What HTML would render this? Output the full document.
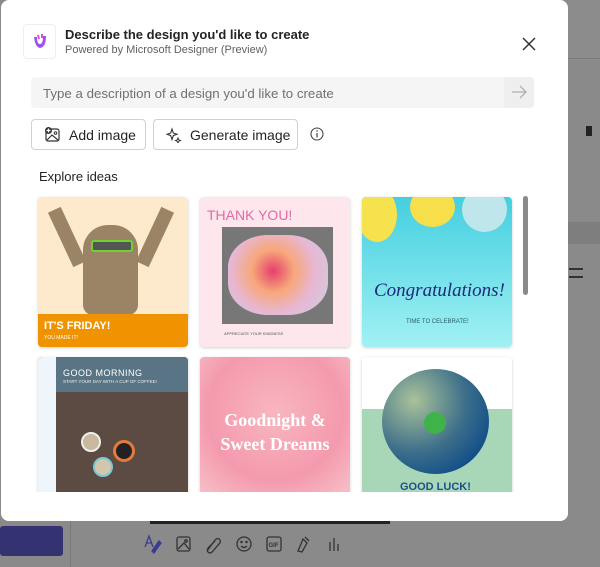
<!DOCTYPE html>
<html><head><meta charset="utf-8"><style>
*{box-sizing:border-box;margin:0;padding:0}
body{width:600px;height:567px;overflow:hidden;background:#8a8a8a;font-family:"Liberation Sans",sans-serif;position:relative}
.abs{position:absolute}
.dlg{left:1px;top:0;width:567px;height:521px;background:#fff;border-radius:8px;overflow:hidden}
.card{position:absolute;width:150px;border-radius:4px;overflow:hidden;box-shadow:0 1px 3px rgba(0,0,0,.18)}
.btn{position:absolute;top:119px;height:31px;border:1px solid #d1d1d1;border-radius:4px;font-size:14px;color:#242424;display:flex;align-items:center;padding-left:12px;gap:8px}
</style></head><body>
<div class="abs" style="left:568px;top:0;width:32px;height:60px;background:#8c8c8c"></div>
<div class="abs" style="left:568px;top:58px;width:32px;height:1px;background:#7a7a7a"></div>
<div class="abs" style="left:568px;top:222px;width:32px;height:22px;background:#7e7e7e"></div>
<div class="abs" style="left:586px;top:126px;width:6px;height:10px;background:#222"></div>
<div class="abs" style="left:569px;top:268px;width:14px;height:10px;border-top:2px solid #333;border-bottom:2px solid #333"></div>
<div class="abs" style="left:0;top:526px;width:63px;height:30px;background:#343270;border-radius:3px"></div>
<div class="abs" style="left:70px;top:521px;width:1px;height:46px;background:#7a7a7a"></div>
<div class="abs" style="left:150px;top:521px;width:240px;height:3px;background:#222"></div>
<svg class="abs" style="left:143px;top:533px" width="210" height="22" viewBox="0 0 210 22" fill="none" stroke="#333" stroke-width="1.3">
<path d="M2 14L6 3L10 14M3.5 10H8.5" stroke="#3d3b8e"/><path d="M9 18L16 8L18 10L11 20Z" stroke="#3d3b8e" fill="#3d3b8e"/>
<rect x="34" y="4" width="13" height="14" rx="2"/><path d="M35 16L41 10L46 16"/><circle cx="43" cy="8" r="1.2"/>
<path d="M64 18L72 7Q75 4 77 7Q78 9 76 11L69 19Q67 21 65 19Q63 17 66 14L72 8"/>
<circle cx="101" cy="11" r="7"/><circle cx="98.5" cy="9" r=".6"/><circle cx="103.5" cy="9" r=".6"/><path d="M98 13Q101 16 104 13"/>
<rect x="124" y="4" width="14" height="14" rx="2"/><text x="125.5" y="14" font-size="6" fill="#333" stroke="none" font-family="Liberation Sans" font-weight="bold">GIF</text>
<path d="M155 18L160 6L164 10L159 19ZM162 4L166 8"/>
<path d="M187 18V9M191 18V5M195 18V11"/>
</svg>

<div class="abs dlg">
  <div class="abs" style="left:22px;top:24px;width:33px;height:35px;border:1px solid #eee;border-radius:4px;display:flex;align-items:center;justify-content:center">
    <svg width="18" height="18" viewBox="0 0 18 18"><path d="M3 4 Q4 14 9 15 Q15 14 15 3 L12 3 Q12 11 9 11 Q6 11 6 4Z" fill="#a34ff0"/><path d="M7 2 L8 6 M11 1 L11 5" stroke="#e04fd0" stroke-width="2"/></svg>
  </div>
  <div class="abs" style="left:64px;top:27px;font-size:13px;font-weight:bold;color:#242424">Describe the design you'd like to create</div>
  <div class="abs" style="left:64px;top:44px;font-size:11px;color:#616161">Powered by Microsoft Designer (Preview)</div>
  <svg class="abs" style="left:521px;top:37px" width="14" height="14" viewBox="0 0 14 14"><path d="M1 1L13 13M13 1L1 13" stroke="#333" stroke-width="1.5"/></svg>

  <div class="abs" style="left:30px;top:77px;width:503px;height:31px;background:#f5f5f5;border-radius:4px"></div>
  <div class="abs" style="left:503px;top:77px;width:30px;height:31px;background:#efefef;border-radius:0 4px 4px 0"></div>
  <div class="abs" style="left:42px;top:86px;font-size:13.3px;color:#707070">Type a description of a design you'd like to create</div>
  <svg class="abs" style="left:510px;top:85px" width="16" height="14" viewBox="0 0 16 14"><path d="M1 7H15M9 1L15 7L9 13" stroke="#b0b0b0" stroke-width="1.3" fill="none"/></svg>

  <div class="btn" style="left:30px;width:115px">
    <svg width="17" height="17" viewBox="0 0 17 17"><rect x="2" y="3" width="13" height="12" rx="2" fill="none" stroke="#333" stroke-width="1.2"/><circle cx="4.5" cy="4.5" r="3.5" fill="#333"/><path d="M4.5 2.5V6.5M2.5 4.5H6.5" stroke="#fff" stroke-width="1.2"/><path d="M3 14L8 9L14 14" stroke="#333" stroke-width="1.2" fill="none"/><circle cx="11.5" cy="7" r="1.3" fill="none" stroke="#333"/></svg>
    Add image</div>
  <div class="btn" style="left:152px;width:145px">
    <svg width="16" height="16" viewBox="0 0 16 16"><path d="M6 2 L7.3 6 L11 7.3 L7.3 8.6 L6 12.5 L4.7 8.6 L1 7.3 L4.7 6Z" fill="none" stroke="#333" stroke-width="1.1"/><path d="M12 11 L12.8 12.8 L14.5 13.5 L12.8 14.2 L12 16 L11.2 14.2 L9.5 13.5 L11.2 12.8Z" fill="none" stroke="#333"/></svg>
    Generate image</div>
  <svg class="abs" style="left:309px;top:127px" width="14" height="14" viewBox="0 0 14 14"><circle cx="7" cy="7" r="6" fill="none" stroke="#444" stroke-width="1.1"/><path d="M7 6V10.5" stroke="#444" stroke-width="1.2"/><circle cx="7" cy="4" r=".8" fill="#444"/></svg>

  <div class="abs" style="left:38px;top:169px;font-size:13px;color:#242424">Explore ideas</div>
  <div class="abs" style="left:522px;top:196px;width:5px;height:99px;background:#8a8a8a;border-radius:3px"></div>

  <div class="card" style="left:37px;top:197px;height:150px;background:#fde9cc">
    <div class="abs" style="left:45px;top:28px;width:55px;height:90px;background:#9b8466;border-radius:25px 25px 10px 10px"></div>
    <div class="abs" style="left:22px;top:10px;width:14px;height:60px;background:#9b8466;transform:rotate(-25deg)"></div>
    <div class="abs" style="left:110px;top:10px;width:14px;height:60px;background:#9b8466;transform:rotate(25deg)"></div>
    <div class="abs" style="left:53px;top:43px;width:42px;height:12px;border:2px solid #6fd22e;border-radius:3px;background:#555"></div>
    <div class="abs" style="left:0;top:117px;width:150px;height:33px;background:#ef9400"></div>
    <div class="abs" style="left:6px;top:123px;font-size:11px;font-weight:bold;color:#fff">IT'S FRIDAY!</div>
    <div class="abs" style="left:6px;top:138px;font-size:5px;color:#fff">YOU MADE IT!</div>
  </div>
  <div class="card" style="left:199px;top:197px;height:150px;background:#fde6ec">
    <div class="abs" style="left:7px;top:10px;font-size:14px;color:#e26aa6">THANK YOU!</div>
    <div class="abs" style="left:22px;top:30px;width:111px;height:97px;background:#777"></div>
    <div class="abs" style="left:28px;top:38px;width:100px;height:80px;background:radial-gradient(circle at 45% 45%,#e53f6d 0,#f7a77a 30%,#e7b7d4 60%,#d8c4d8 80%);border-radius:40%"></div>
    <div class="abs" style="left:24px;top:134px;font-size:4px;color:#555">APPRECIATE YOUR KINDNESS</div>
  </div>
  <div class="card" style="left:361px;top:197px;height:150px;background:linear-gradient(#44cfe0,#a1f1f3)">
    <div class="abs" style="left:-5px;top:-10px;width:40px;height:55px;background:#f6e24c;border-radius:50%"></div>
    <div class="abs" style="left:48px;top:-10px;width:45px;height:40px;background:#f7df4c;border-radius:50%"></div>
    <div class="abs" style="left:100px;top:-10px;width:45px;height:45px;background:#bfe6ea;border-radius:50%"></div>
    <div class="abs" style="left:12px;top:83px;font-family:'Liberation Serif',serif;font-style:italic;font-size:19px;color:#1e2a7a">Congratulations!</div>
    <div class="abs" style="left:44px;top:122px;font-size:6px;color:#2b5f6a">TIME TO CELEBRATE!</div>
  </div>
  <div class="card" style="left:37px;top:357px;height:140px;background:#5b4b42">
    <div class="abs" style="left:0;top:0;width:18px;height:140px;background:#eef5fb"></div>
    <div class="abs" style="left:18px;top:0;width:132px;height:35px;background:#587485"></div>
    <div class="abs" style="left:25px;top:11px;font-size:9px;color:#fff;letter-spacing:.5px">GOOD MORNING</div>
    <div class="abs" style="left:25px;top:22px;font-size:4.5px;color:#eee">START YOUR DAY WITH A CUP OF COFFEE!</div>
    <div class="abs" style="left:75px;top:83px;width:22px;height:22px;border-radius:50%;background:#222;border:3px solid #e57a3a"></div>
    <div class="abs" style="left:43px;top:75px;width:20px;height:20px;border-radius:50%;background:#c9b79e;border:2px solid #eee"></div>
    <div class="abs" style="left:55px;top:100px;width:20px;height:20px;border-radius:50%;background:#d2c6ac;border:2px solid #7cc7d6"></div>
  </div>
  <div class="card" style="left:199px;top:357px;height:140px;background:radial-gradient(circle at 50% 40%,#f8b6c0,#f49aae 60%,#f7c3c9)">
    <div class="abs" style="left:0;top:51px;width:150px;text-align:center;font-family:'Liberation Serif',serif;font-weight:bold;font-size:18px;line-height:24px;color:#fff">Goodnight &amp;<br>Sweet Dreams</div>
  </div>
  <div class="card" style="left:361px;top:357px;height:140px;background:#fff">
    <div class="abs" style="left:0;top:52px;width:150px;height:90px;background:#a8d7b8"></div>
    <div class="abs" style="left:20px;top:12px;width:107px;height:105px;border-radius:50%;background:radial-gradient(circle at 30% 30%,#a9c29a,#3c6e8a 50%,#104e8a 80%)"></div>
    <div class="abs" style="left:62px;top:55px;width:22px;height:22px;border-radius:50%;background:#3db34a"></div>
    <div class="abs" style="left:38px;top:124px;font-size:11px;font-weight:bold;color:#1e4f8c">GOOD LUCK!</div>
  </div>
  <div class="abs" style="left:0;top:492px;width:567px;height:29px;background:#fff"></div>
</div>
</body></html>
